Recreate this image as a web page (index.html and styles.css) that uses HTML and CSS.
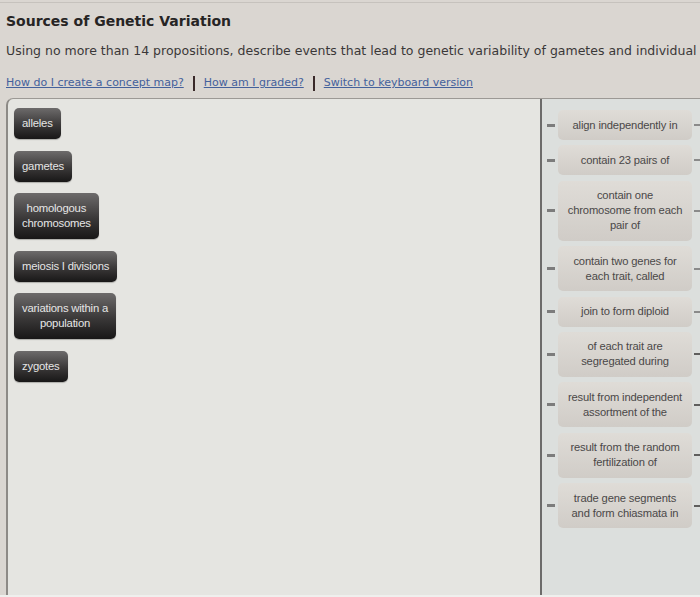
FILE: index.html
```html
<!DOCTYPE html>
<html>
<head>
<meta charset="utf-8">
<title>Sources of Genetic Variation</title>
<link rel="stylesheet" href="styles.css">
</head>
<body>
<div class="header">
  <h1 class="title">Sources of Genetic Variation</h1>
  <p class="subtitle">Using no more than 14 propositions, describe events that lead to genetic variability of gametes and individual</p>
  <div class="links">
    <a href="#">How do I create a concept map?</a><span class="sep"></span><a href="#">How am I graded?</a><span class="sep"></span><a href="#">Switch to keyboard version</a>
  </div>
</div>
<div class="main">
  <div class="canvas">
    <div class="chip">alleles</div>
    <div class="chip">gametes</div>
    <div class="chip">homologous<br>chromosomes</div>
    <div class="chip">meiosis I divisions</div>
    <div class="chip">variations within a<br>population</div>
    <div class="chip">zygotes</div>
  </div>
  <div class="panel">
    <div class="row"><span class="dash"></span><div class="label">align independently in</div><span class="rdash"></span></div>
    <div class="row"><span class="dash"></span><div class="label">contain 23 pairs of</div><span class="rdash"></span></div>
    <div class="row"><span class="dash"></span><div class="label">contain one<br>chromosome from each<br>pair of</div><span class="rdash"></span></div>
    <div class="row"><span class="dash"></span><div class="label">contain two genes for<br>each trait, called</div><span class="rdash"></span></div>
    <div class="row"><span class="dash"></span><div class="label">join to form diploid</div><span class="rdash"></span></div>
    <div class="row"><span class="dash"></span><div class="label">of each trait are<br>segregated during</div><span class="rdash arrow"></span></div>
    <div class="row"><span class="dash"></span><div class="label">result from independent<br>assortment of the</div><span class="rdash arrow"></span></div>
    <div class="row"><span class="dash"></span><div class="label">result from the random<br>fertilization of</div><span class="rdash arrow"></span></div>
    <div class="row"><span class="dash"></span><div class="label">trade gene segments<br>and form chiasmata in</div><span class="rdash arrow"></span></div>
  </div>
</div>
<div class="foot"></div>
</body>
</html>
```
FILE: styles.css
```css
html, body {
  margin: 0;
  padding: 0;
}
body {
  background: #dad6d1;
  padding-top: 2px;
  overflow: hidden;
  width: 700px;
  height: 597px;
  font-family: "DejaVu Sans", Verdana, sans-serif;
  color: #2b2b2b;
}
.header {
  border-top: 1px solid #c6c2bd;
  padding: 10px 0 0 6px;
}
.title {
  margin: 0;
  font-size: 14px;
  line-height: 17px;
  font-weight: bold;
  color: #262424;
}
.subtitle {
  margin: 13px 0 0 0;
  font-size: 12.5px;
  line-height: 15px;
  color: #3a3838;
  white-space: nowrap;
}
.links {
  margin-top: 18px;
  font-size: 11px;
  line-height: 14px;
  height: 14px;
  display: flex;
  align-items: center;
  white-space: nowrap;
}
.links a {
  color: #44619c;
  text-decoration: underline;
}
.sep {
  display: inline-block;
  width: 2px;
  height: 15px;
  background: #3a2a2a;
  margin: 0 9px;
}
.main {
  margin: 8px 0 0 6px;
  height: 496px;
  border-top: 1px solid #9c9995;
  border-left: 2px solid #8d8a86;
  border-top-left-radius: 7px;
  display: flex;
  overflow: hidden;
  background: #e5e5e1;
}
.canvas {
  flex: 1;
  padding: 9px 0 0 6px;
  display: flex;
  flex-direction: column;
  align-items: flex-start;
  gap: 11.5px;
}
.chip {
  padding: 8px 8px;
  font-family: "Liberation Sans", Arial, sans-serif;
  font-size: 11.3px;
  line-height: 15px;
  letter-spacing: -0.2px;
  white-space: nowrap;
  text-align: center;
  color: #e6e6e6;
  background: linear-gradient(#6d6b6b, #3a3838 55%, #181717);
  border-radius: 5px;
  box-shadow: 0 1px 1px rgba(0,0,0,0.25);
}
.panel {
  width: 158px;
  flex: none;
  border-left: 2px solid #6c6b6a;
  background: #dcdfdd;
  padding-top: 11px;
  display: flex;
  flex-direction: column;
  gap: 5.4px;
}
.row {
  display: flex;
  align-items: center;
  padding-left: 5px;
}
.dash {
  width: 8px;
  height: 3px;
  background: #7c7c7c;
  flex: none;
}
.label {
  box-sizing: border-box;
  width: 134px;
  margin-left: 3px;
  padding: 7.5px 2px;
  font-family: "Liberation Sans", Arial, sans-serif;
  font-size: 11.2px;
  line-height: 15px;
  letter-spacing: -0.15px;
  white-space: nowrap;
  text-align: center;
  color: #4a4848;
  background: linear-gradient(#dfdcd7, #d0ccc7);
  border-radius: 5px;
  flex: none;
}
.rdash {
  width: 10px;
  height: 2px;
  margin-left: 2px;
  background: #8a8a8a;
  flex: none;
}
.rdash.arrow {
  background: #5f5e5d;
}
.foot {
  height: 10px;
  background: #efefed;
}
```
